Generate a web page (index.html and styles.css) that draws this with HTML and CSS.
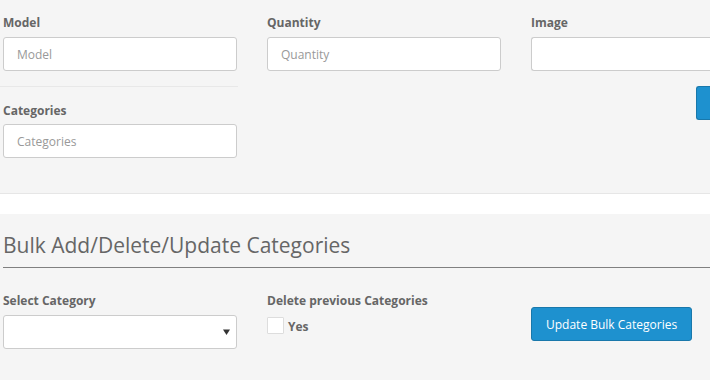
FILE: index.html
```html
<!DOCTYPE html>
<html>
<head>
<meta charset="utf-8">
<link rel="stylesheet" href="styles.css">
</head>
<body>
<div class="top">
  <div class="row3">
    <div class="group">
      <label class="lbl">Model</label>
      <div class="input"><span class="ph">Model</span></div>
    </div>
    <div class="group">
      <label class="lbl">Quantity</label>
      <div class="input"><span class="ph">Quantity</span></div>
    </div>
    <div class="group wide">
      <label class="lbl">Image</label>
      <div class="input open-right"></div>
    </div>
  </div>
  <div class="row2">
    <div class="col1">
      <div class="sep"></div>
      <div class="group">
        <label class="lbl">Categories</label>
        <div class="input"><span class="ph">Categories</span></div>
      </div>
    </div>
    <div class="btn stub"></div>
  </div>
</div>
<div class="band"></div>
<div class="bulk">
  <h2 class="title">Bulk Add/Delete/Update Categories</h2>
  <div class="rule"></div>
  <div class="row3 bottom">
    <div class="group">
      <label class="lbl">Select Category</label>
      <div class="input select">
        <svg class="arrow" width="7" height="6" viewBox="0 0 7 6"><path d="M0 0.5 L7 0.5 L3.5 6 Z" fill="#333"/></svg>
      </div>
    </div>
    <div class="group">
      <label class="lbl">Delete previous Categories</label>
      <div class="check-row"><span class="box"></span><span class="yes">Yes</span></div>
    </div>
    <div class="group btn-cell">
      <div class="btn">Update Bulk Categories</div>
    </div>
  </div>
</div>
</body>
</html>
```
FILE: styles.css
```css
html, body {
  margin: 0;
  padding: 0;
  background: #f5f5f5;
  font-family: "Open Sans", "Liberation Sans", sans-serif;
  font-size: 12px;
  line-height: 17px;
  color: #666;
  width: 710px;
  height: 380px;
  overflow: hidden;
}
.top {
  padding: 14px 0 0 3px;
  height: 179px;
  box-sizing: border-box;
  height: 193px;
}
.row3 {
  display: grid;
  grid-template-columns: 234px 234px 176px;
  column-gap: 30px;
}
.bottom {
  grid-template-columns: 234px 234px 176px;
}
.group {
  display: flex;
  flex-direction: column;
}
.lbl {
  font-weight: bold;
  color: #666;
  height: 17px;
  margin-bottom: 6px;
}
.input {
  box-sizing: border-box;
  height: 34px;
  background: #fff;
  border: 1px solid #ccc;
  border-radius: 3px;
  padding: 0 13px;
  display: flex;
  align-items: center;
}
.open-right {
  width: 179px;
  border-right: none;
  border-radius: 3px 0 0 3px;
}
.ph {
  color: #999;
}
.row2 {
  display: flex;
  align-items: flex-start;
}
.col1 {
  width: 234px;
  display: flex;
  flex-direction: column;
}
.sep {
  margin: 15px 0 15px -3px;
  width: 238px;
  height: 1px;
  background: #e8e8e8;
}
.col1 .lbl {
  margin-bottom: 5px;
}
.btn {
  box-sizing: border-box;
  height: 34px;
  background: #1e91cf;
  border: 1px solid #1978ab;
  border-radius: 3px;
  color: #fff;
  padding: 0 14px;
  display: flex;
  align-items: center;
  white-space: nowrap;
}
.stub {
  margin: 15px 0 0 459px;
  width: 14px;
  flex: none;
  padding: 0;
  border-right: none;
  border-radius: 3px 0 0 3px;
}
.band {
  height: 20px;
  background: #fff;
  border-top: 1px solid #e6e6e6;
}
.bulk {
  padding: 0 0 0 3px;
}
.title {
  margin: 0;
  padding-top: 16px;
  font-size: 21px;
  font-weight: normal;
  line-height: 30px;
  color: #666;
}
.rule {
  margin-top: 7px;
  height: 1px;
  background: #808080;
}
.bottom {
  margin-top: 24px;
}
.select {
  justify-content: flex-end;
  padding-right: 6px;
}
.arrow {
  display: block;
}
.check-row {
  display: flex;
  align-items: flex-end;
  margin-top: 2px;
}
.box {
  box-sizing: border-box;
  width: 17px;
  height: 17px;
  background: #fff;
  border: 1px solid #ddd;
  border-radius: 1px;
}
.yes {
  font-weight: bold;
  margin-left: 4px;
  line-height: 14px;
}
.btn-cell {
  padding-top: 15px;
}
.btn-cell .btn {
  align-self: flex-start;
}
```
